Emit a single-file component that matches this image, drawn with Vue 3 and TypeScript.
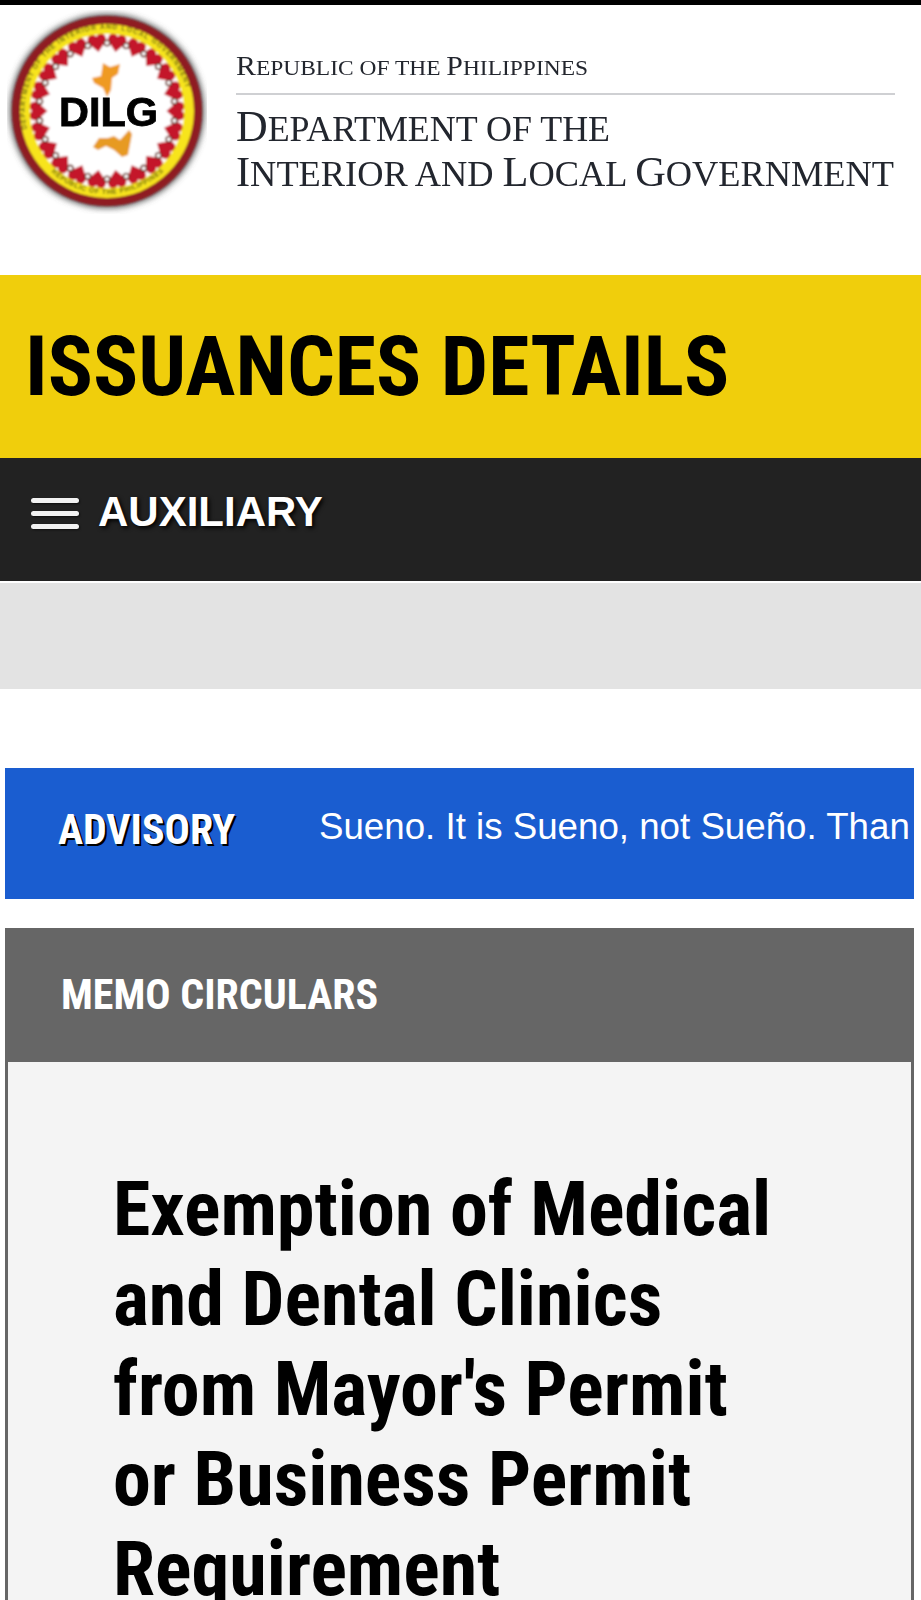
<script setup lang="ts">
const blooms = Array.from({ length: 22 }, (_, i) => {
  const a = (i / 22) * Math.PI * 2
  return { x: 100 + Math.cos(a) * 69, y: 101 + Math.sin(a) * 69, r: (a * 180) / Math.PI + 90 }
})
const dots = Array.from({ length: 22 }, (_, i) => {
  const a = ((i + 0.5) / 22) * Math.PI * 2
  return { x: 100 + Math.cos(a) * 68, y: 101 + Math.sin(a) * 68 }
})
</script>

<template>
  <div class="page">
    <header class="masthead">
      <svg class="seal" viewBox="0 0 200 204" role="img" aria-label="DILG seal">
        <defs>
          <filter id="soft" x="-10%" y="-10%" width="120%" height="120%"><feGaussianBlur stdDeviation="1" /></filter>
          <filter id="halo" x="-10%" y="-10%" width="120%" height="120%"><feGaussianBlur stdDeviation="3" /></filter>
          <filter id="soft3" x="-10%" y="-10%" width="120%" height="120%"><feGaussianBlur stdDeviation="0.5" /></filter>
          <path id="arcTop" d="M20 119 A82 82 0 1 1 180 119" />
          <path id="arcBottom" d="M44 162 A82 82 0 0 0 156 162" />
        </defs>
        <circle cx="100" cy="101" r="97" fill="#555" filter="url(#halo)" />
        <g filter="url(#soft)">
          <circle cx="100" cy="101" r="95" fill="#8f1a22" />
          <circle cx="100" cy="101" r="87" fill="#f7e41e" />
          <circle cx="100" cy="101" r="77" fill="#fff" />
          <text class="arc"><textPath href="#arcTop" textLength="252">DEPARTMENT OF THE INTERIOR AND LOCAL GOVERNMENT</textPath></text>
          <text class="arc"><textPath href="#arcBottom" textLength="124">REPUBLIC OF THE PHILIPPINES</textPath></text>
          <g v-for="(b, i) in blooms" :key="i" :transform="`translate(${b.x} ${b.y}) rotate(${b.r}) scale(1.18)`">
            <path d="M0 8 L-8 -1 Q-8 -7 -4 -7 Q-1 -7 0 -5 Q1 -7 4 -7 Q8 -7 8 -1 Z" fill="#c4122c" />
          </g>
          <g v-for="(d, i) in dots" :key="'d' + i">
            <circle :cx="d.x" :cy="d.y" r="2.8" fill="#fff" stroke="#6c2f24" stroke-width="1.6" />
          </g>
          <path d="M96 53 L103 57 L113 54 L111 64 L105 68 L104 80 L100 87 L96 78 L87 73 L85 68 L94 66 Z" fill="#ef9a22" />
          <path d="M86 137 L92 128 L101 128 L107 126 L113 130 L122 120 L125 124 L121 145 L115 147 L107 140 L99 136 L91 140 Z" fill="#e79a22" />
        </g>
        <text class="seal-text" x="52" y="116" textLength="99" lengthAdjust="spacingAndGlyphs" filter="url(#soft3)">DILG</text>
      </svg>
      <svg class="wordmark" viewBox="0 0 701 180" role="img" aria-label="Republic of the Philippines, Department of the Interior and Local Government">
        <defs><filter id="soft2" x="0" y="0" width="100%" height="100%"><feGaussianBlur stdDeviation="0.5" /></filter></defs>
        <g filter="url(#soft2)">
          <text x="16" y="45" textLength="352" lengthAdjust="spacingAndGlyphs" font-size="22"><tspan font-size="28">R</tspan>EPUBLIC OF THE <tspan font-size="28">P</tspan>HILIPPINES</text>
          <line x1="16" y1="64" x2="675" y2="64" stroke="#cfd0d3" stroke-width="2" />
          <text x="16" y="111" textLength="374" lengthAdjust="spacingAndGlyphs" font-size="36"><tspan font-size="44">D</tspan>EPARTMENT OF THE</text>
          <text x="16" y="156" textLength="658" lengthAdjust="spacingAndGlyphs" font-size="36"><tspan font-size="42">I</tspan>NTERIOR AND <tspan font-size="42">L</tspan>OCAL <tspan font-size="42">G</tspan>OVERNMENT</text>
        </g>
      </svg>
    </header>

    <section class="banner"><h1>ISSUANCES DETAILS</h1></section>

    <nav class="aux">
      <span class="burger"><i></i><i></i><i></i></span>
      <span class="aux-label">AUXILIARY</span>
    </nav>

    <div class="strip"></div>

    <section class="advisory">
      <strong>ADVISORY</strong>
      <div class="ticker"><span>Sueno. It is Sueno, not Sueño. Thank you.</span></div>
    </section>

    <section class="panel">
      <h2>MEMO CIRCULARS</h2>
      <div class="panel-body">
        <h3>Exemption of Medical and Dental Clinics from Mayor's Permit or Business Permit Requirement</h3>
      </div>
    </section>
  </div>
</template>

<style>
html, body { margin: 0; background: #fff; }
</style>

<style scoped>
.page {
  height: 1600px;
  overflow: hidden;
  background: #fff;
  border-top: 5px solid #000;
  box-sizing: border-box;
  font-family: "Liberation Sans", Arial, sans-serif;
}
.masthead {
  height: 270px;
  display: flex;
  align-items: flex-start;
  box-sizing: border-box;
  padding: 5px 0 0 7px;
}
.seal { width: 200px; height: 204px; flex: none; }
.seal-text { font: 700 40px "Liberation Sans", sans-serif; fill: #050505; stroke: #050505; stroke-width: 0.8px; }
.arc { font: 700 7px "Liberation Sans", sans-serif; fill: #6a6612; }
.wordmark { width: 701px; height: 180px; flex: none; margin: 20px 0 0 13px; }
.wordmark text { font-family: "Liberation Serif", serif; fill: #23262e; }
.banner {
  height: 183px;
  background: #f0ce0c;
  display: flex;
  align-items: center;
  padding-left: 25px;
}
.banner h1 {
  margin: 0;
  font: 700 84px/1 "Roboto Condensed", Roboto, sans-serif;
  font-stretch: 75%;
  color: #000;
}
.aux {
  height: 123px;
  background: #222;
  display: flex;
  align-items: flex-start;
  padding: 29px 0 0 31px;
  box-sizing: border-box;
  gap: 19px;
}
.burger { display: flex; flex-direction: column; gap: 8px; width: 48px; padding-top: 11px; }
.burger i { display: block; height: 5px; border-radius: 3px; background: #f2f2f2; box-shadow: 1px 1px 2px rgba(0,0,0,.6); }
.aux-label { color: #fff; font-weight: 700; font-size: 42px; line-height: 50px; text-shadow: 2px 2px 4px #000; }
.strip { height: 106px; margin-top: 2px; background: #e3e3e3; }
.advisory {
  margin: 79px 7px 0 5px;
  height: 131px;
  background: #1a5dd0;
  display: flex;
  box-sizing: border-box;
  padding-top: 37px;
  color: #fff;
  overflow: hidden;
}
.advisory strong {
  width: 258px;
  padding-left: 53px;
  flex: none;
  box-sizing: border-box;
  font: 700 42px/50px "Roboto Condensed", Roboto, sans-serif;
  font-stretch: 75%;
  text-shadow: 2px 2px 0 #000;
}
.ticker { overflow: hidden; flex: 1; margin-right: 3px; padding-left: 56px; font-size: 36.7px; line-height: 44px; white-space: nowrap; }
.panel {
  margin: 29px 7px 0 5px;
  background: #f4f4f4;
  border: 3px solid #666;
  border-top: 0;
  border-bottom: 0;
}
.panel h2 {
  margin: 0;
  height: 134px;
  box-sizing: border-box;
  background: #666;
  color: #fff;
  padding: 42px 0 0 53px;
  font: 700 42px/50px "Roboto Condensed", Roboto, sans-serif;
  font-stretch: 75%;
}
.panel-body { padding: 102px 120px 0 105px; height: 900px; box-sizing: border-box; }
.panel-body h3 {
  margin: 0;
  color: #000;
  font: 700 76.1px/90px "Roboto Condensed", Roboto, sans-serif;
  font-stretch: 75%;
}
</style>
